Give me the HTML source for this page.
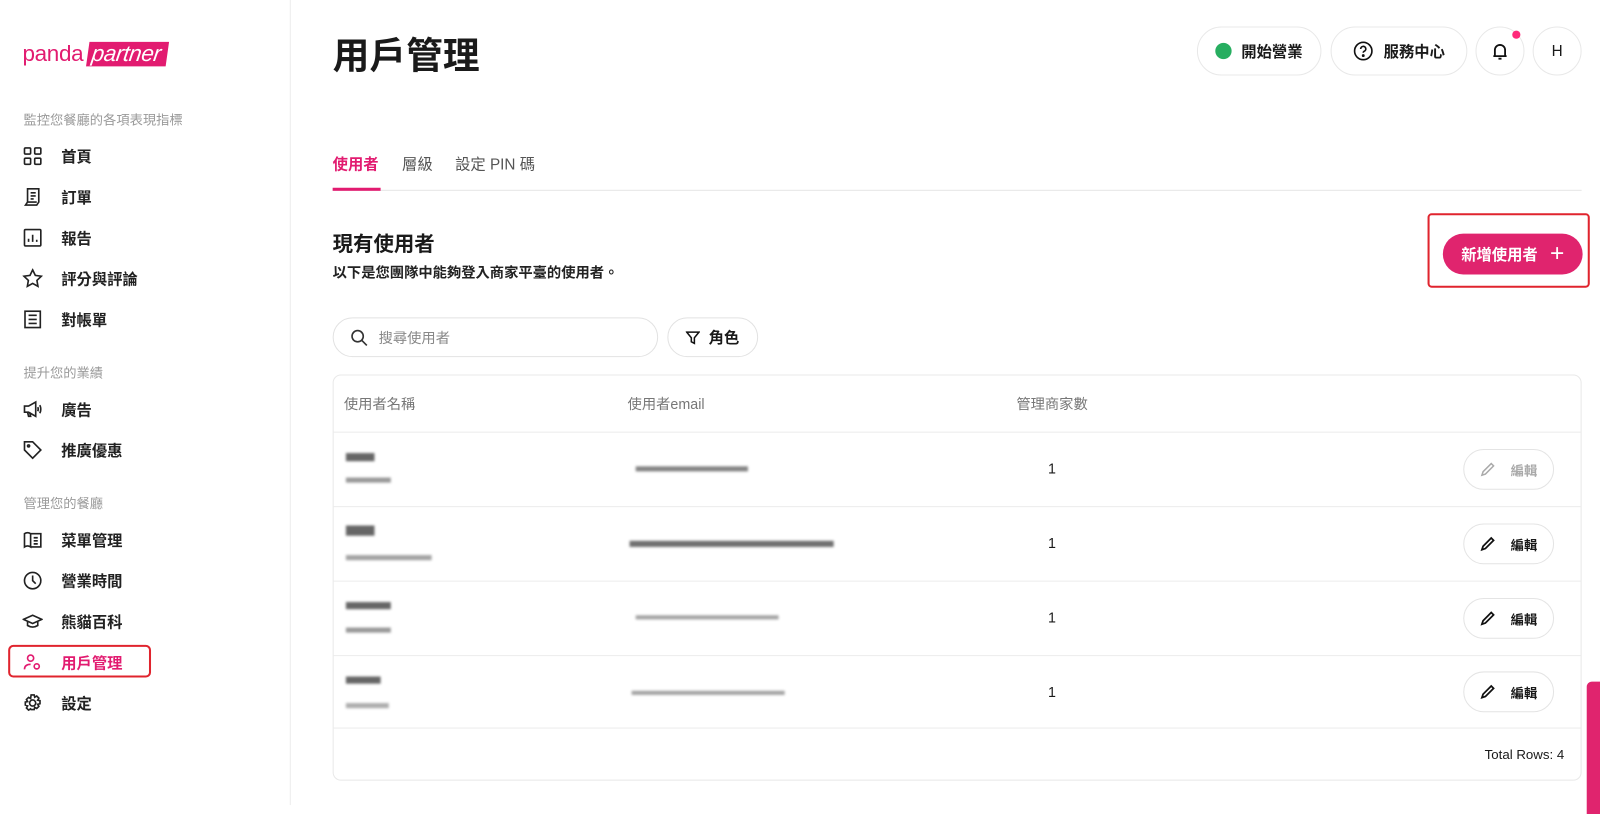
<!DOCTYPE html>
<html><head><meta charset="utf-8"><style>
*{box-sizing:border-box;margin:0;padding:0}
body{width:1600px;height:789px;overflow:hidden;background:#fff;font-family:"Liberation Sans","Noto Sans CJK TC",sans-serif;color:#1a1a1a;position:relative}
#w{position:absolute;left:0;top:0;width:1568px;height:774px;transform:scale(1.0204);transform-origin:0 0}
.side{position:absolute;left:0;top:0;width:285px;height:789px;border-right:1px solid #ececec}
.logo{position:absolute;left:22px;top:40px;font-size:22px;color:#e21b70;letter-spacing:-0.3px}
.logo span.p{display:inline-block;background:#e21b70;color:#fff;font-style:italic;padding:0 6px 0 4px;transform:skewX(-8deg);margin-left:4px;line-height:24px}
.sec{position:absolute;left:23px;font-size:13px;color:#9a9a9a}
.it{position:absolute;left:22px;height:24px;display:flex;align-items:center;font-size:15px;font-weight:bold;color:#222}
.it svg{width:20px;height:20px;margin-right:18px;fill:none;stroke:#222;stroke-width:1.6}
h1{position:absolute;left:326px;top:26px;font-size:36px;font-weight:bold;white-space:nowrap}
.pill{position:absolute;top:26px;height:48px;border:1px solid #e8e8e8;border-radius:24px;display:flex;align-items:center;justify-content:center;font-size:15px;font-weight:bold}
.tabs{position:absolute;left:326px;top:150px;font-size:15px;color:#555}
.tabline{position:absolute;left:326px;top:186px;width:1224px;height:1px;background:#e6e6e6}
.abs{position:absolute;white-space:nowrap}
.tbl{position:absolute;left:326px;top:367px;width:1224px;height:398px;border:1px solid #e8e8e8;border-radius:8px}
.row{position:absolute;left:0;width:1222px;border-top:1px solid #ececec}
.blur{position:absolute;background:#333;filter:blur(1.2px);opacity:.75}
.edit{position:absolute;left:1107px;width:89px;height:40px;border:1px solid #e4e4e4;border-radius:20px;display:flex;align-items:center;justify-content:center;font-size:13px;font-weight:bold;gap:14px}
</style></head><body><div id="w">
<div class="side">
<div class="logo">panda<span class="p">partner</span></div>
<div class="sec" style="top:107px">監控您餐廳的各項表現指標</div>
<div class="it" style="top:141px"><svg viewBox="0 0 20 20"><rect x="2" y="2" width="6" height="6" rx="1"/><rect x="2" y="12" width="6" height="6" rx="1"/><rect x="12" y="2" width="6" height="6" rx="1"/><rect x="12" y="12" width="6" height="6" rx="1"/></svg>首頁</div>
<div class="it" style="top:181px"><svg viewBox="0 0 20 20"><path d="M5 15V2h11v13l-2 3H3l2-3h9M8 6h5M8 9h5M8 12h3"/></svg>訂單</div>
<div class="it" style="top:221px"><svg viewBox="0 0 20 20"><rect x="2" y="2" width="16" height="16" rx="1"/><path d="M6 14v-3M10 14V7M14 14v-2"/></svg>報告</div>
<div class="it" style="top:261px"><svg viewBox="0 0 20 20"><path d="M10 1.5l2.6 5.4 5.9.8-4.3 4.1 1 5.8L10 14.8l-5.2 2.8 1-5.8L1.5 7.7l5.9-.8z"/></svg>評分與評論</div>
<div class="it" style="top:301px"><svg viewBox="0 0 20 20"><rect x="2.5" y="2" width="15" height="16"/><path d="M6 6h8M6 10h8M6 14h8"/></svg>對帳單</div>
<div class="sec" style="top:355px">提升您的業績</div>
<div class="it" style="top:389px"><svg viewBox="0 0 20 20"><path d="M2 7h4l7-4v14l-7-4H2zM5 13l1 4h2l-1-4M15 8q1 2 0 4M17 6q2 4 0 8"/></svg>廣告</div>
<div class="it" style="top:429px"><svg viewBox="0 0 20 20"><path d="M2 2h8l8 8-8 8-8-8z"/><circle cx="6" cy="6" r="1"/></svg>推廣優惠</div>
<div class="sec" style="top:483px">管理您的餐廳</div>
<div class="it" style="top:517px"><svg viewBox="0 0 20 20"><path d="M2 4q3-2 6 0v13q-3-2-6 0zM8 4h10v13H8M11 8h4M11 11h4M11 14h4"/></svg>菜單管理</div>
<div class="it" style="top:557px"><svg viewBox="0 0 20 20"><circle cx="10" cy="10" r="8"/><path d="M10 5v5l3 3"/></svg>營業時間</div>
<div class="it" style="top:597px"><svg viewBox="0 0 20 20"><path d="M1 8l9-4 9 4-9 4zM5 10v4q5 3 10 0v-4"/></svg>熊貓百科</div>
<div style="position:absolute;left:8px;top:632px;width:140px;height:32px;border:2px solid #e0242e;border-radius:5px"></div>
<div class="it" style="top:637px;color:#e21b70"><svg viewBox="0 0 20 20" style="stroke:#e21b70"><circle cx="8" cy="6" r="3"/><path d="M2 17q0-5 6-5"/><circle cx="14" cy="14" r="2.5"/></svg>用戶管理</div>
<div class="it" style="top:677px"><svg viewBox="0 0 20 20"><circle cx="10" cy="10" r="3"/><path d="M8.5 2h3l.5 2.3 2-1.2 2.1 2.1-1.2 2 2.3.5v3l-2.3.5 1.2 2-2.1 2.1-2-1.2-.5 2.3h-3L8 15.7l-2 1.2-2.1-2.1 1.2-2L2.8 12V9l2.3-.5-1.2-2 2.1-2.1 2 1.2z"/></svg>設定</div>
</div>

<h1>用戶管理</h1>
<div class="pill" style="left:1173px;width:122px"><span style="width:16px;height:16px;border-radius:50%;background:#27ae60;margin-right:9px"></span>開始營業</div>
<div class="pill" style="left:1304px;width:134px"><svg width="20" height="20" viewBox="0 0 20 20" style="margin-right:10px" fill="none" stroke="#111" stroke-width="1.6"><circle cx="10" cy="10" r="8.5"/><path d="M7.5 8a2.5 2.5 0 1 1 3.3 2.3c-.6.3-.8.7-.8 1.4"/><circle cx="10" cy="14.5" r=".6" fill="#111"/></svg>服務中心</div>
<div class="pill" style="left:1446px;width:48px"><svg width="20" height="20" viewBox="0 0 20 20" fill="none" stroke="#111" stroke-width="1.8"><path d="M5 15V9a5 5 0 0 1 10 0v6M3.5 15h13M8.5 17.5h3"/></svg></div>
<div style="position:absolute;left:1482px;top:30px;width:8px;height:8px;border-radius:50%;background:#ff2a7a"></div>
<div class="pill" style="left:1502px;width:48px;font-weight:normal;font-size:15px">H</div>

<div class="tabs"><span style="position:absolute;left:0;color:#e21b70;font-weight:bold;white-space:nowrap">使用者</span><span style="position:absolute;left:68px;white-space:nowrap">層級</span><span style="position:absolute;left:120px;white-space:nowrap">設定 PIN 碼</span></div>
<div class="tabline"></div>
<div style="position:absolute;left:326px;top:184px;width:47px;height:3px;background:#e21b70"></div>

<div class="abs" style="left:326px;top:223px;font-size:20px;font-weight:bold">現有使用者</div>
<div class="abs" style="left:326px;top:257px;font-size:14px;font-weight:bold;color:#222">以下是您團隊中能夠登入商家平臺的使用者。</div>
<div style="position:absolute;left:1399px;top:209px;width:159px;height:73px;border:2px solid #e0242e;border-radius:4px"></div>
<div style="position:absolute;left:1414px;top:229px;width:137px;height:40px;border-radius:20px;background:#e0246e;color:#fff;font-size:15px;font-weight:bold;display:flex;align-items:center;justify-content:center">新增使用者 <span style="font-size:24px;font-weight:normal;margin-left:12px;line-height:20px">+</span></div>

<div style="position:absolute;left:326px;top:311px;width:319px;height:39px;border:1px solid #e2e2e2;border-radius:20px;display:flex;align-items:center;padding-left:16px;font-size:14px;color:#888"><svg width="18" height="18" viewBox="0 0 18 18" fill="none" stroke="#333" stroke-width="1.6" style="margin-right:10px"><circle cx="7.5" cy="7.5" r="5.5"/><path d="M11.5 11.5l5 5"/></svg>搜尋使用者</div>
<div style="position:absolute;left:654px;top:311px;width:89px;height:39px;border:1px solid #e2e2e2;border-radius:20px;display:flex;align-items:center;justify-content:center;font-size:15px;font-weight:bold"><svg width="14" height="14" viewBox="0 0 14 14" fill="none" stroke="#111" stroke-width="1.5" style="margin-right:8px"><path d="M1 1.5h12L8.5 7v5.5l-3-1.5V7z"/></svg>角色</div>

<div class="tbl">
<div class="abs" style="left:10px;top:18px;font-size:14px;color:#777">使用者名稱</div>
<div class="abs" style="left:288px;top:18px;font-size:14px;color:#777">使用者email</div>
<div class="abs" style="left:669px;top:18px;font-size:14px;color:#777">管理商家數</div>
<div class="row" style="top:55px;height:73px">
 <div class="blur" style="left:12px;top:20px;width:28px;height:8px"></div><div class="blur" style="left:12px;top:44px;width:44px;height:5px;opacity:.5"></div>
 <div class="blur" style="left:296px;top:33px;width:110px;height:5px;opacity:.6"></div>
 <div class="abs" style="left:700px;top:27px;font-size:14px">1</div>
 <div class="edit" style="top:16px;color:#aaa"><svg width="16" height="16" viewBox="0 0 14 14" fill="none" stroke="#aaa" stroke-width="1.3"><path d="M2 12l1-3 7-7 2 2-7 7z"/></svg>編輯</div>
</div>
<div class="row" style="top:128px;height:73px">
 <div class="blur" style="left:12px;top:18px;width:28px;height:10px"></div><div class="blur" style="left:12px;top:47px;width:84px;height:5px;opacity:.45"></div>
 <div class="blur" style="left:290px;top:33px;width:200px;height:6px;opacity:.7"></div>
 <div class="abs" style="left:700px;top:27px;font-size:14px">1</div>
 <div class="edit" style="top:16px"><svg width="16" height="16" viewBox="0 0 14 14" fill="none" stroke="#111" stroke-width="1.5"><path d="M2 12l1-3 7-7 2 2-7 7z"/></svg>編輯</div>
</div>
<div class="row" style="top:201px;height:73px">
 <div class="blur" style="left:12px;top:20px;width:44px;height:7px"></div><div class="blur" style="left:12px;top:45px;width:44px;height:5px;opacity:.5"></div>
 <div class="blur" style="left:296px;top:33px;width:140px;height:4px;opacity:.45"></div>
 <div class="abs" style="left:700px;top:27px;font-size:14px">1</div>
 <div class="edit" style="top:16px"><svg width="16" height="16" viewBox="0 0 14 14" fill="none" stroke="#111" stroke-width="1.5"><path d="M2 12l1-3 7-7 2 2-7 7z"/></svg>編輯</div>
</div>
<div class="row" style="top:274px;height:71px">
 <div class="blur" style="left:12px;top:20px;width:34px;height:7px"></div><div class="blur" style="left:12px;top:46px;width:42px;height:5px;opacity:.4"></div>
 <div class="blur" style="left:292px;top:34px;width:150px;height:4px;opacity:.45"></div>
 <div class="abs" style="left:700px;top:27px;font-size:14px">1</div>
 <div class="edit" style="top:15px"><svg width="16" height="16" viewBox="0 0 14 14" fill="none" stroke="#111" stroke-width="1.5"><path d="M2 12l1-3 7-7 2 2-7 7z"/></svg>編輯</div>
</div>
<div class="row" style="top:345px;height:52px">
 <div class="abs" style="right:16px;top:18px;font-size:13px">Total Rows: 4</div>
</div>
</div>
<div style="position:absolute;left:1555px;top:668px;width:20px;height:130px;background:#e0246e;border-radius:5px 0 0 0"></div>
</div></body></html>
